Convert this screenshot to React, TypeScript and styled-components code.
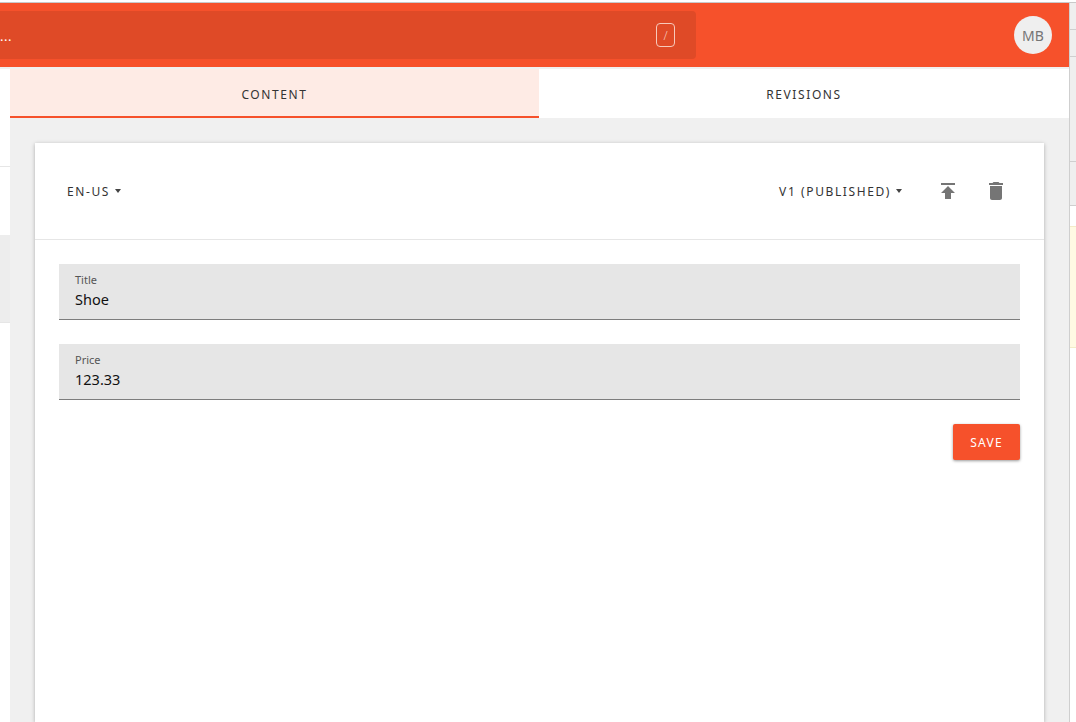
import React from "react";
import styled, { createGlobalStyle } from "styled-components";

const Global = createGlobalStyle`
  html, body { margin: 0; padding: 0; height: 100%; overflow: hidden; background: #fff; }
  body { font-family: "Noto Sans", "Open Sans", sans-serif; }
  #root { height: 100%; }
`;
const Page = styled.div`
  width: 1076px; height: 722px; overflow: hidden; display: flex; flex-direction: column;
  box-sizing: border-box; background: #fff; padding-top: 2px;
`;
const Frame = styled.div`
  flex: 1; min-height: 0; display: flex; border-top: 1px solid #c9c9c9;
`;
const Workspace = styled.div`
  width: 1069px; flex: none; display: flex; flex-direction: column; min-height: 0;
`;
const Header = styled.header`
  height: 64px; flex: none; background: #f6512b; display: flex; align-items: center;
  justify-content: space-between; padding-right: 17px; box-sizing: border-box;
`;
const Search = styled.div`
  width: 696px; height: 48px; background: #df4a27; border-radius: 0 4px 4px 0; display: flex;
  align-items: center; justify-content: space-between; padding-right: 21px; box-sizing: border-box;
  color: #fff; font-size: 14px;
`;
const Hint = styled.span`
  width: 19px; height: 24px; border: 1px solid #f7c9bb; border-radius: 4px; box-sizing: border-box;
  display: flex; align-items: center; justify-content: center; color: #f7c9bb; font-size: 12px; font-weight: 300;
`;
const Dots = styled.span` line-height: 1; margin-top: 2px; font-size: 13px; letter-spacing: .5px; `;
const Avatar = styled.div`
  width: 38px; height: 38px; border-radius: 50%; background: #efefef; color: #757575; font-size: 14px;
  display: flex; align-items: center; justify-content: center;
`;
const Body = styled.div` flex: 1; display: flex; min-height: 0; background: #f0f0f0; `;
const LeftRail = styled.aside`
  width: 10px; flex: none; background: #fff; display: flex; flex-direction: column; margin-top: 2px;
`;
const RailLine = styled.div` height: 1px; background: #e6e6e6; margin-top: 97px; flex: none; `;
const RailShade = styled.div` height: 87px; flex: none; background: #ededed; margin-top: 68px; border-bottom: 1px solid #e6e6e6; `;
const Main = styled.main`
  flex: 1; min-width: 0; display: flex; flex-direction: column; padding-top: 2px;
`;
const Tabs = styled.nav` display: flex; height: 49px; flex: none; background: #fff; `;
const Tab = styled.div<{ $active?: boolean }>`
  width: ${(p) => (p.$active ? "529px" : "530px")};
  background: ${(p) => (p.$active ? "#feebe5" : "#fff")};
  border-bottom: ${(p) => (p.$active ? "2px solid #f6512b" : "0")};
  box-sizing: border-box; display: flex; align-items: center; justify-content: center;
  font-size: 12px; letter-spacing: 1.6px; color: #333;
  padding: 4px 0 ${(p) => (p.$active ? "0" : "2px")};
`;
const Content = styled.div` flex: 1; padding: 25px 25px 0; min-height: 0; `;
const Card = styled.section`
  background: #fff; height: 100%; box-shadow: 0 1px 4px rgba(0,0,0,.28); width: 1009px;
`;
const CardBar = styled.div`
  height: 96px; border-bottom: 1px solid #e6e6e6; display: flex; align-items: center; justify-content: space-between;
  padding: 0 36px 0 32px;
`;
const Menu = styled.div`
  display: flex; align-items: center; font-size: 12px; letter-spacing: 1.6px; color: #333; gap: 5px;
`;
const Caret = styled.span`
  width: 0; height: 0; border-left: 3.5px solid transparent; border-right: 3.5px solid transparent; border-top: 4px solid #444;
  margin-right: 1px;
`;
const Tools = styled.div` display: flex; align-items: center; `;
const IconBtn = styled.svg<{ $gap: number }>`
  width: 24px; height: 24px; fill: #757575; display: block; margin-left: ${(p) => p.$gap}px;
`;
const Form = styled.form` padding: 24px 24px 0; display: flex; flex-direction: column; gap: 24px; `;
const Field = styled.div`
  height: 56px; background: #e6e6e6; border-bottom: 1px solid #7d7d7d; box-sizing: border-box; padding: 9px 16px 0;
`;
const Label = styled.div` font-size: 11px; line-height: 14px; color: #555; `;
const Value = styled.div` font-size: 14.5px; line-height: 20px; color: #111; margin-top: 2px; `;
const Actions = styled.div` display: flex; justify-content: flex-end; `;
const Save = styled.button`
  width: 67px; height: 36px; border: 0; border-radius: 2px; background: #f6512b; color: #fff; font-family: inherit;
  font-size: 12px; letter-spacing: 1.25px; box-shadow: 0 1px 3px rgba(0,0,0,.4); padding: 0;
`;
const RightRail = styled.aside`
  flex: 1; background: #fff; display: flex; flex-direction: column; border-left: 1px solid #cfcfcf;
`;
const RailBlock = styled.div<{ $h: number }>`
  height: ${(p) => p.$h}px; flex: none; background: #efefef; border-bottom: 1px solid #cfcfcf; box-sizing: border-box;
`;
const Notice = styled.div`
  height: 122px; flex: none; margin-top: 20px; background: #fffae3; border-top: 1px solid #f3ecc8; border-bottom: 1px solid #f3ecc8; box-sizing: border-box;
`;

export default function App() {
  return (
    <Page>
      <Global />
      <Frame>
        <Workspace>
          <Header>
            <Search><Dots>...</Dots><Hint>/</Hint></Search>
            <Avatar>MB</Avatar>
          </Header>
          <Body>
            <LeftRail>
              <RailLine />
              <RailShade />
            </LeftRail>
            <Main>
              <Tabs>
                <Tab $active>CONTENT</Tab>
                <Tab>REVISIONS</Tab>
              </Tabs>
              <Content>
                <Card>
                  <CardBar>
                    <Menu>EN-US <Caret /></Menu>
                    <Tools>
                      <Menu>V1 (PUBLISHED) <Caret /></Menu>
                      <IconBtn $gap={33} viewBox="0 0 24 24"><path d="M5 4v2h14V4H5zm0 10h4v6h6v-6h4l-7-7-7 7z" /></IconBtn>
                      <IconBtn $gap={24} viewBox="0 0 24 24"><path d="M6 19c0 1.1.9 2 2 2h8c1.1 0 2-.9 2-2V7H6v12zM19 4h-3.5l-1-1h-5l-1 1H5v2h14V4z" /></IconBtn>
                    </Tools>
                  </CardBar>
                  <Form>
                    <Field><Label>Title</Label><Value>Shoe</Value></Field>
                    <Field><Label>Price</Label><Value>123.33</Value></Field>
                    <Actions><Save type="button">SAVE</Save></Actions>
                  </Form>
                </Card>
              </Content>
            </Main>
          </Body>
        </Workspace>
        <RightRail>
          <RailBlock $h={27} />
          <RailBlock $h={27} />
          <RailBlock $h={105} />
          <RailBlock $h={44} />
          <Notice />
        </RightRail>
      </Frame>
    </Page>
  );
}
